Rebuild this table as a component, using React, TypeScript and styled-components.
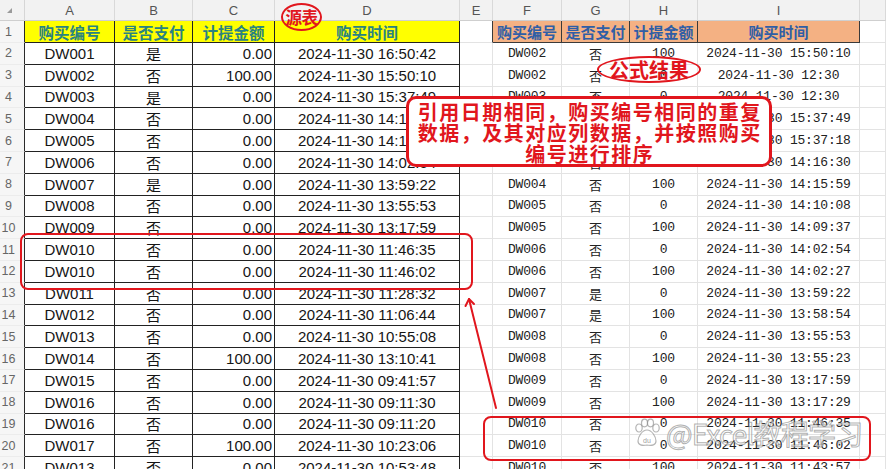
import React from 'react';
import styled, { createGlobalStyle, css } from 'styled-components';

const GlobalStyle = createGlobalStyle`
  html, body { margin: 0; padding: 0; background: #fff; width: 886px; height: 469px; overflow: hidden; }
  #root { width: 886px; height: 469px; }
`;

const RED = '#e1161d';

const Sheet = styled.div`
  position: relative;
  width: 886px;
  height: 469px;
  overflow: hidden;
  display: grid;
  grid-template-columns: 25px 90px 78px 82px 185px 33px 69px 68px 68px 162px 26px;
  grid-template-rows: 21px 22px repeat(20, 21.8px);
  font-family: 'Liberation Sans', 'Noto Sans CJK SC', sans-serif;
  background: #fff;
`;

const Corner = styled.div`
  box-sizing: border-box;
  background: #f2f2f2;
  border-right: 1px solid #d6d6d6;
  border-bottom: 1px solid #cfcfcf;
  position: relative;
  &::after {
    content: '';
    position: absolute;
    left: 7px;
    top: 8px;
    width: 0;
    height: 0;
    border-left: 5px solid transparent;
    border-bottom: 5px solid #9a9a9a;
  }
`;

const ColHead = styled.div`
  box-sizing: border-box;
  background: #f2f2f2;
  border-right: 1px solid #d9d9d9;
  border-bottom: 1px solid #cfcfcf;
  display: flex;
  align-items: center;
  justify-content: center;
  font-size: 13px;
  color: #555;
`;

const RowNum = styled.div`
  box-sizing: border-box;
  background: #f6f6f6;
  border-right: 1px solid #2a2a2a;
  border-bottom: 1px solid #ececec;
  display: flex;
  align-items: center;
  justify-content: center;
  padding-right: 7px;
  font-size: 12.5px;
  color: #666;
`;

type Kind = 'lhead' | 'ldata' | 'blank' | 'rhead' | 'rdata';
type Align = 'left' | 'center' | 'right';

const kindStyles: Record<Kind, ReturnType<typeof css>> = {
  lhead: css`
    background: #ffff00;
    border-right: 1px solid #222;
    border-bottom: 1px solid #222;
    font-family: 'Noto Sans CJK SC', sans-serif;
    font-weight: 700;
    font-size: 15.5px;
    color: #2a8380;
  `,
  ldata: css`
    border-right: 1px solid #222;
    border-bottom: 1px solid #222;
    font-size: 15px;
    color: #151515;
  `,
  blank: css`
    border-right: 1px solid #e3e3e3;
    border-bottom: 1px solid #e3e3e3;
  `,
  rhead: css`
    background: #f4b183;
    border-right: 1px solid #3a3a3a;
    border-bottom: 1px solid #3a3a3a;
    font-family: 'Noto Sans CJK SC', sans-serif;
    font-weight: 700;
    font-size: 15px;
    color: #2f5ea6;
  `,
  rdata: css`
    border-right: 1px solid #e3e3e3;
    border-bottom: 1px solid #e3e3e3;
    font-family: 'Liberation Mono', 'Noto Sans CJK SC', monospace;
    font-size: 13px;
    letter-spacing: -0.2px;
    color: #222;
  `,
};

const Cell = styled.div<{ $kind: Kind; $align?: Align; $edgeDark?: boolean; $cjkLight?: boolean }>`
  box-sizing: border-box;
  display: flex;
  align-items: center;
  justify-content: ${(p) => (p.$align === 'right' ? 'flex-end' : p.$align === 'left' ? 'flex-start' : 'center')};
  padding: 0 2px;
  white-space: nowrap;
  ${(p) => kindStyles[p.$kind]}
  ${(p) => p.$edgeDark && css`border-right-color: #3a3a3a;`}
  ${(p) => p.$cjkLight && css`font-family: 'Noto Sans CJK SC', sans-serif; font-weight: 400;`}
`;

/* ---------- overlays ---------- */

const Ellipse = styled.div`
  position: absolute;
  box-sizing: border-box;
  border: 2px solid ${RED};
  border-radius: 50%;
  display: flex;
  align-items: center;
  justify-content: center;
  font-family: 'Noto Sans CJK SC', sans-serif;
  font-weight: 700;
  color: ${RED};
  white-space: nowrap;
  line-height: 1;
`;

const SourceTag = styled(Ellipse)`
  left: 281px;
  top: 3px;
  width: 41px;
  height: 28px;
  font-size: 16.5px;
  letter-spacing: -0.5px;
`;

const ResultTag = styled(Ellipse)`
  left: 597px;
  top: 56px;
  width: 104px;
  height: 27px;
  font-size: 20px;
  padding-top: 1px;
`;

const Callout = styled.div`
  position: absolute;
  left: 406px;
  top: 96px;
  width: 366px;
  box-sizing: border-box;
  padding: 2px 0 0;
  background: #fff;
  border: 3px solid ${RED};
  border-radius: 10px;
  display: flex;
  flex-direction: column;
  align-items: center;
  font-family: 'Noto Sans CJK SC', sans-serif;
  font-weight: 700;
  font-size: 20px;
  letter-spacing: 1.5px;
  line-height: 21px;
  color: ${RED};
`;

const CalloutLine = styled.div`
  white-space: nowrap;
  margin-right: -1.5px;
`;

const Highlight = styled.div`
  position: absolute;
  box-sizing: border-box;
  border: 2.5px solid ${RED};
  border-radius: 8px;
  pointer-events: none;
`;

const SourceHighlight = styled(Highlight)`
  left: 20px;
  top: 233px;
  width: 453px;
  height: 57px;
`;

const ResultHighlight = styled(Highlight)`
  left: 483px;
  top: 416px;
  width: 388px;
  height: 45px;
`;

const ArrowLayer = styled.svg`
  position: absolute;
  left: 0;
  top: 0;
  width: 886px;
  height: 469px;
  pointer-events: none;
`;

const Watermark = styled.div`
  position: absolute;
  left: 632px;
  top: 417px;
  display: flex;
  align-items: center;
  gap: 4px;
  pointer-events: none;
`;

const WatermarkText = styled.span`
  font-family: 'Noto Sans CJK SC', sans-serif;
  font-weight: 400;
  font-size: 28px;
  line-height: 32px;
  color: rgba(255, 255, 255, 0.55);
  -webkit-text-stroke: 1px rgba(110, 110, 110, 0.55);
  white-space: nowrap;
  letter-spacing: -0.8px;
`;

const leftRows: [string, string, string, string][] = [
  ['DW001', '是', '0.00', '2024-11-30 16:50:42'],
  ['DW002', '否', '100.00', '2024-11-30 15:50:10'],
  ['DW003', '是', '0.00', '2024-11-30 15:37:49'],
  ['DW004', '否', '0.00', '2024-11-30 14:16:30'],
  ['DW005', '否', '0.00', '2024-11-30 14:10:08'],
  ['DW006', '否', '0.00', '2024-11-30 14:02:54'],
  ['DW007', '是', '0.00', '2024-11-30 13:59:22'],
  ['DW008', '否', '0.00', '2024-11-30 13:55:53'],
  ['DW009', '否', '0.00', '2024-11-30 13:17:59'],
  ['DW010', '否', '0.00', '2024-11-30 11:46:35'],
  ['DW010', '否', '0.00', '2024-11-30 11:46:02'],
  ['DW011', '否', '0.00', '2024-11-30 11:28:32'],
  ['DW012', '否', '0.00', '2024-11-30 11:06:44'],
  ['DW013', '否', '0.00', '2024-11-30 10:55:08'],
  ['DW014', '否', '100.00', '2024-11-30 13:10:41'],
  ['DW015', '否', '0.00', '2024-11-30 09:41:57'],
  ['DW016', '否', '0.00', '2024-11-30 09:11:30'],
  ['DW016', '否', '0.00', '2024-11-30 09:11:20'],
  ['DW017', '否', '100.00', '2024-11-30 10:23:06'],
  ['DW013', '否', '0.00', '2024-11-30 10:53:48'],
];

const rightRows: [string, string, string, string][] = [
  ['DW002', '否', '100', '2024-11-30 15:50:10'],
  ['DW002', '否', '0', '2024-11-30 12:30'],
  ['DW003', '否', '0', '2024-11-30 12:30'],
  ['DW003', '是', '0', '2024-11-30 15:37:49'],
  ['DW003', '是', '100', '2024-11-30 15:37:18'],
  ['DW004', '否', '0', '2024-11-30 14:16:30'],
  ['DW004', '否', '100', '2024-11-30 14:15:59'],
  ['DW005', '否', '0', '2024-11-30 14:10:08'],
  ['DW005', '否', '100', '2024-11-30 14:09:37'],
  ['DW006', '否', '0', '2024-11-30 14:02:54'],
  ['DW006', '否', '100', '2024-11-30 14:02:27'],
  ['DW007', '是', '0', '2024-11-30 13:59:22'],
  ['DW007', '是', '100', '2024-11-30 13:58:54'],
  ['DW008', '否', '0', '2024-11-30 13:55:53'],
  ['DW008', '否', '100', '2024-11-30 13:55:23'],
  ['DW009', '否', '0', '2024-11-30 13:17:59'],
  ['DW009', '否', '100', '2024-11-30 13:17:29'],
  ['DW010', '否', '0', '2024-11-30 11:46:35'],
  ['DW010', '否', '0', '2024-11-30 11:46:02'],
  ['DW010', '否', '100', '2024-11-30 11:43:57'],
];

const colLetters = ['A', 'B', 'C', 'D', 'E', 'F', 'G', 'H', 'I', ''];
const headers = ['购买编号', '是否支付', '计提金额', '购买时间'];

const BaiduPaw = () => (
  <svg width="30" height="30" viewBox="0 0 30 30">
    <g fill="rgba(255,255,255,0.5)" stroke="rgba(120,120,120,0.55)" strokeWidth="1.2">
      <ellipse cx="7" cy="10" rx="3.2" ry="4" />
      <ellipse cx="12.5" cy="5" rx="3" ry="3.8" />
      <ellipse cx="18.5" cy="5" rx="3" ry="3.8" />
      <ellipse cx="24" cy="10" rx="3.2" ry="4" />
      <path d="M15 12 C10 12 6 19 6 23 C6 27 10 28 15 27 C20 28 24 27 24 23 C24 19 20 12 15 12 Z" />
    </g>
    <text x="15" y="25" textAnchor="middle" fontSize="7" fontFamily="Liberation Sans, sans-serif" fill="rgba(110,110,110,0.7)">du</text>
  </svg>
);

export default function App() {
  return (
    <>
      <GlobalStyle />
      <Sheet>
        <Corner />
        {colLetters.map((c, i) => (
          <ColHead key={`ch${i}`}>{c}</ColHead>
        ))}

        <RowNum>1</RowNum>
        {headers.map((h, i) => (
          <Cell key={`lh${i}`} $kind="lhead">{h}</Cell>
        ))}
        <Cell $kind="blank" $edgeDark />
        {headers.map((h, i) => (
          <Cell key={`rh${i}`} $kind="rhead">{h}</Cell>
        ))}
        <Cell $kind="blank" />

        {leftRows.map((l, i) => {
          const r = rightRows[i];
          return (
            <React.Fragment key={`row${i}`}>
              <RowNum>{i + 2}</RowNum>
              <Cell $kind="ldata">{l[0]}</Cell>
              <Cell $kind="ldata" $cjkLight>{l[1]}</Cell>
              <Cell $kind="ldata" $align="right">{l[2]}</Cell>
              <Cell $kind="ldata">{l[3]}</Cell>
              <Cell $kind="blank" />
              <Cell $kind="rdata">{r[0]}</Cell>
              <Cell $kind="rdata">{r[1]}</Cell>
              <Cell $kind="rdata">{r[2]}</Cell>
              <Cell $kind="rdata">{r[3]}</Cell>
              <Cell $kind="blank" />
            </React.Fragment>
          );
        })}

        <SourceTag>源表</SourceTag>
        <ResultTag>公式结果</ResultTag>
        <Callout>
          <CalloutLine>引用日期相同，购买编号相同的重复</CalloutLine>
          <CalloutLine>数据，及其对应列数据，并按照购买</CalloutLine>
          <CalloutLine>编号进行排序</CalloutLine>
        </Callout>
        <SourceHighlight />
        <ResultHighlight />
        <ArrowLayer viewBox="0 0 886 469">
          <g stroke={RED} strokeWidth="2" fill="none" strokeLinecap="round" strokeLinejoin="round">
            <line x1="496" y1="408" x2="469" y2="299" />
            <polyline points="465.5,306 469,299 474,304" />
          </g>
        </ArrowLayer>
        <Watermark>
          <BaiduPaw />
          <WatermarkText>@Excel教程学习</WatermarkText>
        </Watermark>
      </Sheet>
    </>
  );
}
